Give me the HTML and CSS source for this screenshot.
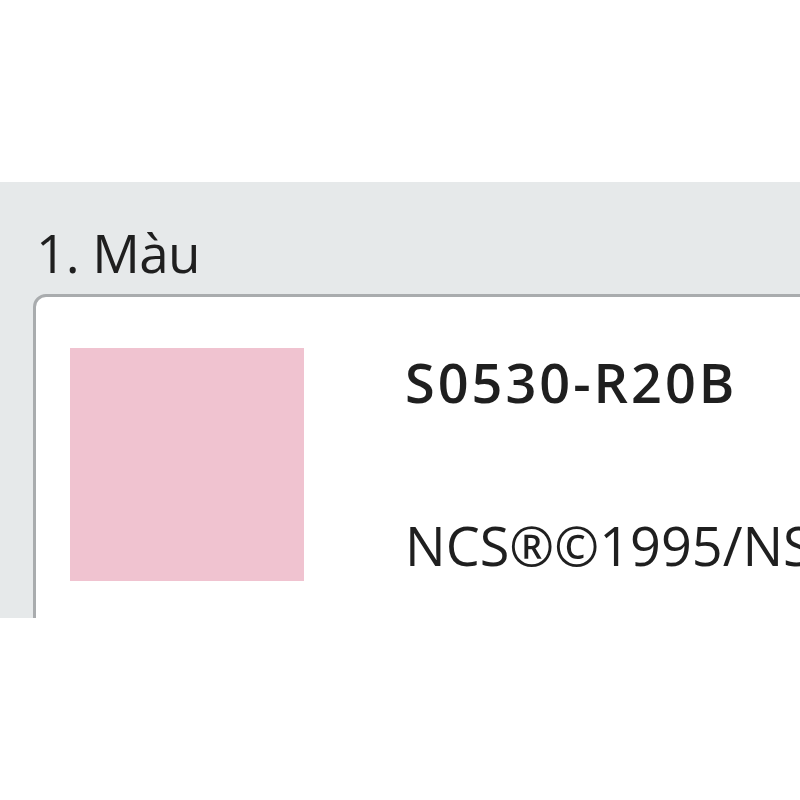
FILE: index.html
```html
<!DOCTYPE html>
<html lang="vi">
<head>
<meta charset="utf-8">
<title>Màu</title>
<link rel="stylesheet" href="styles.css">
</head>
<body>
<div class="top"></div>
<section class="panel">
  <h2 class="title">1. Màu</h2>
  <div class="card">
    <div class="swatch"></div>
    <div class="info">
      <div class="code">S0530-R20B</div>
      <div class="copy">NCS®©1995/NSC2004</div>
    </div>
  </div>
</section>
</body>
</html>
```
FILE: styles.css
```css
html, body {
  margin: 0;
  padding: 0;
  background: #ffffff;
  font-family: "Open Sans", "Noto Sans", sans-serif;
  color: #1f1f1f;
}
.top {
  height: 182px;
}
.panel {
  height: 436px;
  background: #e6e9ea;
  overflow: hidden;
  padding: 38px 0 0 33px;
  box-sizing: border-box;
}
.title {
  margin: 0 0 9px 3px;
  font-size: 53px;
  font-weight: 400;
  line-height: 65px;
  letter-spacing: -0.6px;
  white-space: nowrap;
}
.card {
  width: 1000px;
  height: 400px;
  background: #ffffff;
  border: 3px solid #a9acae;
  border-radius: 13px;
  display: flex;
  gap: 101px;
  padding: 51px 0 0 34px;
  box-sizing: border-box;
}
.swatch {
  width: 234px;
  height: 233px;
  background: #f0c3d0;
  flex: none;
}
.info {
  display: flex;
  flex-direction: column;
  gap: 98px;
  padding-top: 2px;
  white-space: nowrap;
}
.code {
  font-size: 54px;
  font-weight: 600;
  line-height: 1.2;
  letter-spacing: 3px;
}
.copy {
  font-size: 54px;
  font-weight: 400;
  line-height: 1.2;
}
```
